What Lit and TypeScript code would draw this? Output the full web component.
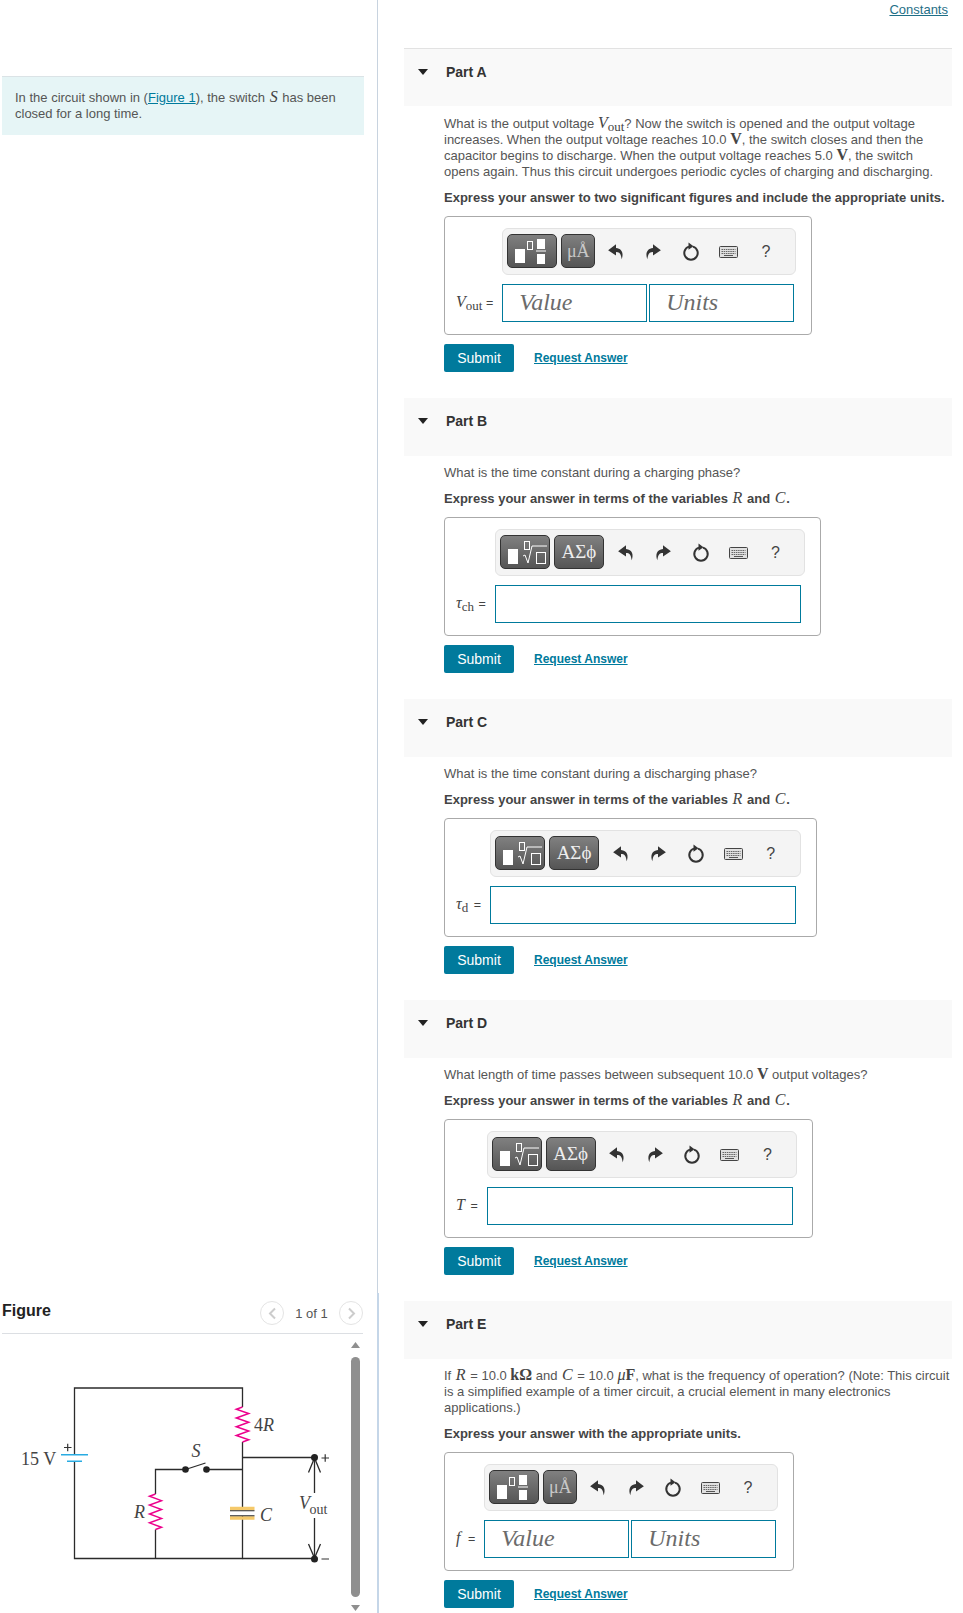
import { LitElement, html, css, svg, type TemplateResult } from 'lit'
import { customElement } from 'lit/decorators.js'

type Part = {
  title: string
  question: TemplateResult
  hint: TemplateResult | string
  label: TemplateResult
  labelGap: number
  kind: 'units' | 'symbolic'
  inputWidth?: number
}

const v = (s: string) => html`<span class="mi var">${s}</span>`
const rm = (s: string) => html`<span class="mr">${s}</span>`
const RC = html`Express your answer in terms of the variables ${v('R')} and ${v('C')}.`

const PARTS: Part[] = [
  {
    title: 'Part A',
    question: html`What is the output voltage <span class="mi">V</span><sub class="sub">out</sub>? Now the switch is opened and the output voltage increases. When the output voltage reaches 10.0 ${rm('V')}, the switch closes and then the capacitor begins to discharge. When the output voltage reaches 5.0 ${rm('V')}, the switch opens again. Thus this circuit undergoes periodic cycles of charging and discharging.`,
    hint: 'Express your answer to two significant figures and include the appropriate units.',
    label: html`<span class="mi">V</span><sub class="sub">out</sub>`,
    labelGap: 0,
    kind: 'units',
  },
  {
    title: 'Part B',
    question: html`What is the time constant during a charging phase?`,
    hint: RC,
    label: html`<span class="mi">τ</span><sub class="sub">ch</sub>`,
    labelGap: 1,
    kind: 'symbolic',
    inputWidth: 306,
  },
  {
    title: 'Part C',
    question: html`What is the time constant during a discharging phase?`,
    hint: RC,
    label: html`<span class="mi">τ</span><sub class="sub">d</sub>`,
    labelGap: 2,
    kind: 'symbolic',
    inputWidth: 306,
  },
  {
    title: 'Part D',
    question: html`What length of time passes between subsequent 10.0 ${rm('V')} output voltages?`,
    hint: RC,
    label: html`<span class="mi">T</span>`,
    labelGap: 2,
    kind: 'symbolic',
    inputWidth: 306,
  },
  {
    title: 'Part E',
    question: html`If ${v('R')} = 10.0 ${rm('kΩ')} and ${v('C')} = 10.0 <span class="mi">μ</span>${rm('F')}, what is the frequency of operation? (Note: This circuit is a simplified example of a timer circuit, a crucial element in many electronics applications.)`,
    hint: 'Express your answer with the appropriate units.',
    label: html`<span class="mi">f</span>`,
    labelGap: 4,
    kind: 'units',
  },
]

// White glyph blocks of the two template buttons
const templatesIcon = svg`
  <rect x="7" y="14" width="10" height="14" fill="#fff" />
  <rect x="19.5" y="6.5" width="5" height="8" fill="none" stroke="#fff" />
  <rect x="29" y="4" width="8" height="10" fill="#fff" />
  <rect x="28" y="15.5" width="10" height="1" fill="#fff" />
  <rect x="29" y="19" width="8" height="10" fill="#fff" />`

const radicalIcon = svg`
  <rect x="7" y="13" width="10" height="15" fill="#fff" />
  <rect x="23.5" y="5.5" width="5" height="8" fill="none" stroke="#fff" />
  <path d="M22 20l2-1 3 8 4-17h15" fill="none" stroke="#fff" />
  <rect x="35.5" y="16.5" width="9" height="11" fill="none" stroke="#fff" />`

const UNDO = 'M8 1 1 6.500 8 11V8c3 0 4.500 1.500 5 6.500 2-5 .5-9.500-5-10Z'

const zigzag = (x: number, y0: number, y1: number, amp: number) => {
  const step = (y1 - y0) / 8
  let d = `M${x} ${y0}`
  for (let i = 0; i < 8; i++) {
    const side = i % 2 === 0 ? -amp : amp
    d += `L${x + side} ${y0 + step * (i + 0.5)}`
  }
  return `${d}L${x} ${y1}`
}

@customElement('app-root')
export class AppRoot extends LitElement {
  static styles = css`
    :host {
      display: block;
      height: 1613px;
      overflow: hidden;
      background: #fff;
      font-family: 'Liberation Sans', Arial, sans-serif;
      font-size: 13px;
      line-height: 16px;
      color: #555;
    }
    .page {
      display: flex;
    }
    a {
      color: #007a9c;
    }

    /* ---- Left column ---- */
    .left {
      width: 378px;
      flex: none;
    }
    .stem-pane {
      height: 1293px;
      box-sizing: border-box;
      padding: 76px 0 0 2px;
      border-right: 1px solid #c8d3df;
    }
    .intro {
      width: 362px;
      box-sizing: border-box;
      padding: 13px 13px 13px;
      background: #e6f5f6;
      border-top: 1px solid #dbe3e6;
    }
    .figure-pane {
      height: 320px;
      box-sizing: border-box;
      padding-left: 2px;
      border-right: 2px solid #c5d6e8;
      margin-right: -1px;
    }
    .figure-head {
      width: 361px;
      height: 41px;
      box-sizing: border-box;
      display: flex;
      align-items: center;
      border-bottom: 1px solid #dcdfe3;
    }
    .figure-head h2 {
      margin: 0 auto 4px 0;
      font-size: 16px;
      font-weight: bold;
      color: #222;
    }
    .round {
      width: 24px;
      height: 24px;
      box-sizing: border-box;
      border: 1px solid #e4e4e4;
      border-radius: 50%;
      display: flex;
      align-items: center;
      justify-content: center;
    }
    .count {
      width: 55px;
      margin-top: 2px;
      text-align: center;
      font-size: 13px;
      color: #555;
    }
    .figure-body {
      display: flex;
    }
    .circuit {
      display: block;
      width: 349px;
      height: 279px;
      margin-left: -2px;
      flex: none;
    }
    .scroll {
      width: 9px;
      margin-left: 2px;
      display: flex;
      flex-direction: column;
      align-items: center;
      padding-top: 8px;
    }
    .thumb {
      width: 9px;
      height: 240px;
      margin: 9px 0 8px;
      border-radius: 5px;
      background: #8f8f8f;
    }

    /* ---- Right column ---- */
    .right {
      width: 548px;
      margin-left: 26px;
      flex: none;
    }
    .constants {
      height: 48px;
      padding: 2px 4px 0 0;
      box-sizing: border-box;
      text-align: right;
    }
    .constants a {
      color: #1f6f87;
    }
    .part {
      height: 301px;
    }
    .part-e {
      height: auto;
    }
    .part-head {
      height: 58px;
      box-sizing: border-box;
      padding: 14px 0 0 14px;
      display: flex;
      gap: 18px;
      background: #f9f9f9;
      font-size: 14px;
      font-weight: bold;
      line-height: 18px;
      color: #333;
    }
    .part-a {
      height: 350px;
    }
    .part-a .part-head {
      border-top: 1px solid #e2e2e2;
    }
    .tri {
      margin-top: 6px;
      flex: none;
    }
    .part-body {
      padding: 9px 0 0 40px;
    }
    .part-a .part-body {
      padding-top: 10px;
    }
    p {
      margin: 0;
    }
    .hint {
      margin-top: 10px;
      font-weight: bold;
      color: #444;
    }
    .mi,
    .mr {
      font-family: 'Liberation Serif', 'Times New Roman', serif;
      font-size: 16px;
      font-weight: normal;
      line-height: 0;
      color: #444;
    }
    .mi {
      font-style: italic;
    }
    .mr {
      font-weight: bold;
    }
    .var {
      margin: 0 1px;
    }
    .sub {
      font-family: 'Liberation Serif', 'Times New Roman', serif;
      font-size: 13px;
      font-weight: normal;
      line-height: 0;
      vertical-align: -3px;
      color: #444;
    }
    .box {
      display: inline-grid;
      grid-template-columns: auto auto;
      column-gap: 9px;
      row-gap: 9px;
      margin-top: 10px;
      padding: 11px 15px 12px 11px;
      border: 1px solid #aaa;
      border-radius: 4px;
      vertical-align: top;
    }
    .toolbar {
      grid-column: 2;
      height: 47px;
      box-sizing: border-box;
      padding: 5px 10px 0 4px;
      display: flex;
      background: #f4f4f4;
      border: 1px solid #e2e2e2;
      border-radius: 6px;
    }
    .tpl {
      height: 34px;
      box-sizing: border-box;
      margin-right: 4px;
      border: 1px solid #333;
      border-radius: 5px;
      background: linear-gradient(#808080, #555);
      display: flex;
      align-items: center;
      justify-content: center;
      font-family: 'Liberation Serif', 'Times New Roman', serif;
    }
    .tpl svg {
      display: block;
    }
    .wide {
      width: 50px;
    }
    .narrow {
      width: 34px;
      font-size: 18px;
      color: #c8c8c8;
    }
    .symbols {
      width: 50px;
      margin-right: 5px;
      font-size: 19px;
      color: #eee;
    }
    .tools {
      display: flex;
      margin-left: -2px;
    }
    .tool {
      width: 37.500px;
      height: 34px;
      margin-top: 1px;
      display: flex;
      align-items: center;
      justify-content: center;
      font-size: 16px;
      color: #444;
    }
    .label {
      align-self: center;
      white-space: nowrap;
      font-size: 12.500px;
      color: #444;
    }
    .inputs {
      display: flex;
      gap: 2px;
    }
    input {
      height: 38px;
      box-sizing: border-box;
      padding: 0 0 2px 16px;
      margin: 0;
      background: #fff;
      border: 1.500px solid #007a9c;
      border-radius: 0;
      outline: none;
      font-family: 'Liberation Serif', 'Times New Roman', serif;
      font-style: italic;
      font-size: 24px;
      color: #666;
    }
    input::placeholder {
      color: #6b6b6b;
      opacity: 1;
    }
    .half {
      width: 145px;
    }
    .actions {
      margin-top: 9px;
      display: flex;
      align-items: center;
      gap: 20px;
    }
    button {
      width: 70px;
      height: 28px;
      padding: 0;
      border: 0;
      border-radius: 2px;
      background: #007a9c;
      color: #fff;
      font: 14px 'Liberation Sans', Arial, sans-serif;
    }
    .actions a {
      font-size: 12px;
      font-weight: bold;
    }
  `

  private renderToolbar(kind: Part['kind']) {
    return html`
      <div class="toolbar">
        ${kind === 'units'
          ? html`
              <div class="tpl wide"><svg width="48" height="32" viewBox="0 0 48 32">${templatesIcon}</svg></div>
              <div class="tpl narrow">μÅ</div>
            `
          : html`
              <div class="tpl wide"><svg width="48" height="32" viewBox="0 0 48 32">${radicalIcon}</svg></div>
              <div class="tpl symbols">ΑΣϕ</div>
            `}
        <div class="tools">
          <div class="tool">
            <svg width="18" height="18" viewBox="0 0 16 16"><path d=${UNDO} fill="#333" /></svg>
          </div>
          <div class="tool">
            <svg width="18" height="18" viewBox="0 0 16 16"><path d=${UNDO} fill="#333" transform="matrix(-1 0 0 1 16 0)" /></svg>
          </div>
          <div class="tool">
            <svg width="18" height="20" viewBox="0 0 18 20">
              <path d="M11 4.600a6.700 6.700 0 1 1-4 0" fill="none" stroke="#333" stroke-width="2" />
              <path d="M6.500 0.500 11.500 4.200 6.500 7.800Z" fill="#333" />
            </svg>
          </div>
          <div class="tool">
            <svg width="19" height="12" viewBox="0 0 19 12">
              <rect x=".5" y=".5" width="18" height="11" rx="1" fill="#e0e0e0" stroke="#444" />
              <path d="M2.500 3.500h14M2.500 5.500h14M2.500 7.500h14" stroke="#666" stroke-dasharray="1.500 .7" />
              <path d="M5 9.500h9" stroke="#555" />
            </svg>
          </div>
          <div class="tool">?</div>
        </div>
      </div>
    `
  }

  private renderPart(part: Part, i: number) {
    const cls = i === 0 ? 'part part-a' : i === 4 ? 'part part-e' : 'part'
    return html`
      <section class=${cls}>
        <div class="part-head">
          <svg class="tri" width="10" height="6" viewBox="0 0 10 6"><path d="M0 0h10L5 6Z" fill="#222" /></svg>
          <span>${part.title}</span>
        </div>
        <div class="part-body">
          <p>${part.question}</p>
          <p class="hint">${part.hint}</p>
          <div class="box">
            ${this.renderToolbar(part.kind)}
            <div class="label">${part.label} <span style="margin-left:${part.labelGap}px">=</span></div>
            <div class="inputs">
              ${part.kind === 'units'
                ? html`
                    <input class="half" placeholder="Value" />
                    <input class="half" placeholder="Units" />
                  `
                : html`<input style="width:${part.inputWidth}px" />`}
            </div>
          </div>
          <div class="actions">
            <button>Submit</button>
            <a href="#">Request Answer</a>
          </div>
        </div>
      </section>
    `
  }

  private renderCircuit() {
    const serif = "'Liberation Serif', serif"
    return html`
      <svg class="circuit" viewBox="0 1334 349 279" font-family=${serif} fill="#444">
        <g fill="none" stroke="#2b2b2b" stroke-width="1.300">
          <path d="M74.500 1454.500V1388H242.500V1407M242.500 1442V1510M242.500 1516V1558.500H74.500V1461" />
          <path d="M242.500 1457.500H314.500M242.500 1469.500H206.500M185.500 1469.500H155.500V1494M155.500 1529.500V1558.500M314.500 1558.500H242.500" />
          <path d="M185.500 1469.500 205.500 1463" />
          <path d="M314.500 1458V1493M314.500 1518V1558" />
          <path d="M308.500 1472.500 314.500 1458 320.500 1472.500M308.500 1544 314.500 1558 320.500 1544" />
        </g>
        <path d=${zigzag(242.5, 1407, 1442, 6.2)} fill="none" stroke="#ec008c" stroke-width="1.500" />
        <path d=${zigzag(155.5, 1494, 1529.5, 6)} fill="none" stroke="#ec008c" stroke-width="1.500" />
        <path d="M61 1454.700H88M67 1461.300H82" stroke="#29abe2" stroke-width="1.500" />
        <path d="M64 1447.500H71.500M67.700 1443.800V1451.200M321.500 1458H329M325.200 1454.200V1461.800M321.500 1559H329" stroke="#333" stroke-width="1.200" />
        <path d="M230 1508.500H254.500M230 1518H254.500" stroke="#f5c96a" stroke-width="3.500" />
        <path d="M230 1510.800H254.500M230 1515.800H254.500" stroke="#2b2b2b" stroke-width="1.100" />
        <circle cx="185.500" cy="1469.500" r="3.300" fill="#222" />
        <circle cx="206.500" cy="1469.500" r="3.300" fill="#222" />
        <circle cx="314.500" cy="1457.500" r="3.500" fill="#222" />
        <circle cx="314.500" cy="1559" r="3.500" fill="#222" />
        <text x="21" y="1465" font-size="18">15 V</text>
        <text x="254" y="1431" font-size="18">4<tspan font-style="italic">R</tspan></text>
        <text x="134" y="1518" font-size="18" font-style="italic">R</text>
        <text x="191.500" y="1457" font-size="18" font-style="italic">S</text>
        <text x="260" y="1521" font-size="18" font-style="italic">C</text>
        <text x="299" y="1509" font-size="18" font-style="italic">V</text>
        <text x="309.500" y="1514" font-size="14">out</text>
      </svg>
    `
  }

  render() {
    return html`
      <div class="page">
        <div class="left">
          <div class="stem-pane">
            <div class="intro">
              In the circuit shown in (<a href="#">Figure 1</a>), the switch ${v('S')} has been closed for a long time.
            </div>
          </div>
          <div class="figure-pane">
            <div class="figure-head">
              <h2>Figure</h2>
              <div class="round">
                <svg width="9" height="13" viewBox="0 0 9 13"><path d="M7 1.500 2 6.500l5 5" fill="none" stroke="#ccc" stroke-width="2" /></svg>
              </div>
              <div class="count">1 of 1</div>
              <div class="round">
                <svg width="9" height="13" viewBox="0 0 9 13"><path d="M2 1.500l5 5-5 5" fill="none" stroke="#ccc" stroke-width="2" /></svg>
              </div>
            </div>
            <div class="figure-body">
              ${this.renderCircuit()}
              <div class="scroll">
                <svg width="9" height="6" viewBox="0 0 9 6"><path d="M0 6 4.500 0 9 6Z" fill="#8f8f8f" /></svg>
                <div class="thumb"></div>
                <svg width="9" height="6" viewBox="0 0 9 6"><path d="M0 0 4.500 6 9 0Z" fill="#8f8f8f" /></svg>
              </div>
            </div>
          </div>
        </div>
        <div class="right">
          <div class="constants"><a href="#">Constants</a></div>
          ${PARTS.map((p, i) => this.renderPart(p, i))}
        </div>
      </div>
    `
  }
}
